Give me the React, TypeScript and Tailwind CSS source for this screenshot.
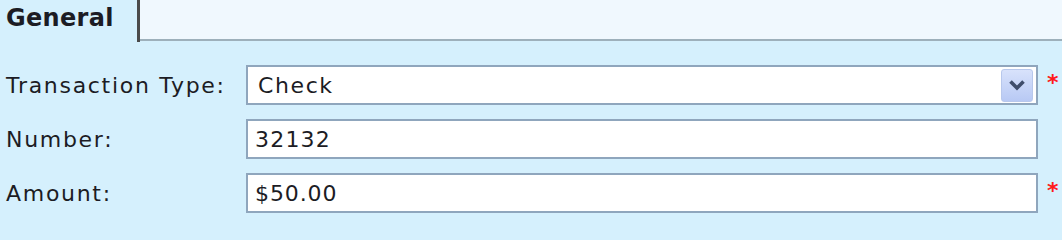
export default function App() {
  const font = { fontFamily: '"DejaVu Sans", Verdana, sans-serif' };
  return (
    <div className="w-[1062px] h-[240px] bg-[#d5f0fd] text-[#1c1c24] overflow-hidden" style={font}>
      {/* Tab strip */}
      <div className="flex h-[41px]">
        <div className="w-[137px] pl-[6px] pt-[6px] text-[24px] leading-none font-bold tracking-[0.3px] bg-[#d5f0fd]">General</div>
        <div className="w-[3px] h-[42px] bg-[#4a4a4a]" />
        <div className="flex-1 bg-[#f0f8fe] border-b-2 border-[#9db0bb]" />
      </div>

      {/* Fields */}
      <div className="flex flex-col gap-[14px] pt-[24px]">
        <Row label="Transaction Type:" required>
          <div className="flex-1 h-[40px] bg-white border-2 border-[#8fa6bd] flex items-center pl-[10px] pr-[3px]">
            <span className="flex-1 text-[22px] tracking-[1.6px]">Check</span>
            <div className="w-[32px] h-[33px] rounded-[3px] border border-[#b8c8ec] bg-gradient-to-b from-[#d8e2fb] to-[#b8c9f4] flex items-center justify-center">
              <svg width="18" height="12" viewBox="0 0 18 12">
                <path d="M2.5 2.5 L9 9 L15.5 2.5" fill="none" stroke="#3f4d6b" strokeWidth="3.6" />
              </svg>
            </div>
          </div>
        </Row>
        <Row label="Number:">
          <div className="flex-1 h-[40px] bg-white border-2 border-[#8fa6bd] flex items-center pl-[7px] text-[22px] tracking-[1.2px]">32132</div>
        </Row>
        <Row label="Amount:" required>
          <div className="flex-1 h-[40px] bg-white border-2 border-[#8fa6bd] flex items-center pl-[7px] text-[22px] tracking-[0.9px]">$50.00</div>
        </Row>
      </div>
    </div>
  );
}

function Row({ label, required, children }: { label: string; required?: boolean; children: React.ReactNode }) {
  return (
    <div className="flex items-center h-[40px]">
      <div className="w-[246px] pl-[6px] text-[22px] tracking-[1.7px]">{label}</div>
      <div className="w-[792px] flex">{children}</div>
      <div className="w-[24px] pl-[9px] self-start pt-[7px] text-[#ff1a1a] text-[22px] font-bold leading-none">
        {required ? '*' : ''}
      </div>
    </div>
  );
}
